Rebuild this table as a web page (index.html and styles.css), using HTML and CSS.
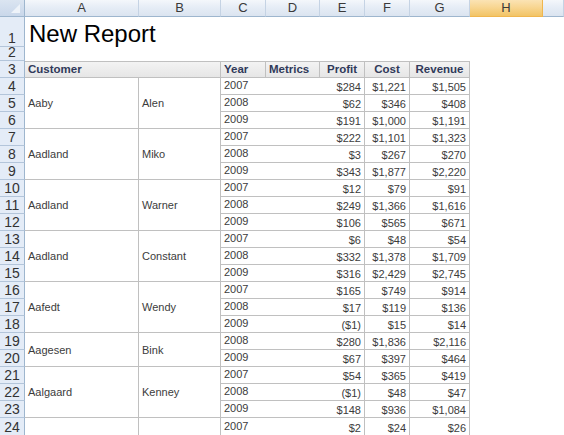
FILE: index.html
```html
<!DOCTYPE html>
<html>
<head>
<meta charset="utf-8">
<title>New Report</title>
<link rel="stylesheet" href="styles.css">
</head>
<body>
<div class="sheet">
  <div class="corner"><svg width="24" height="16" viewBox="0 0 24 16"><polygon points="20,4 20,13 11,13" fill="#eef3f9"/></svg></div>
  <div class="ch">A</div><div class="ch">B</div><div class="ch">C</div><div class="ch">D</div><div class="ch">E</div><div class="ch">F</div><div class="ch">G</div><div class="ch sel">H</div><div class="ch"></div>

  <div class="rh">1</div><div class="title">New Report</div>
  <div class="rh">2</div><div class="blank wide"></div>

  <div class="rh">3</div>
  <div class="hd l span2">Customer</div>
  <div class="hd l">Year</div>
  <div class="hd l">Metrics</div>
  <div class="hd">Profit</div>
  <div class="hd">Cost</div>
  <div class="hd">Revenue</div>
  <div class="blank span2"></div>

  <div class="rh">4</div><div class="name g3">Aaby</div><div class="name g3">Alen</div><div class="yr">2007</div><div class="num">$284</div><div class="num">$1,221</div><div class="num">$1,505</div><div class="blank span2"></div>
  <div class="rh">5</div><div class="yr">2008</div><div class="num">$62</div><div class="num">$346</div><div class="num">$408</div><div class="blank span2"></div>
  <div class="rh">6</div><div class="yr">2009</div><div class="num">$191</div><div class="num">$1,000</div><div class="num">$1,191</div><div class="blank span2"></div>

  <div class="rh">7</div><div class="name g3">Aadland</div><div class="name g3">Miko</div><div class="yr">2007</div><div class="num">$222</div><div class="num">$1,101</div><div class="num">$1,323</div><div class="blank span2"></div>
  <div class="rh">8</div><div class="yr">2008</div><div class="num">$3</div><div class="num">$267</div><div class="num">$270</div><div class="blank span2"></div>
  <div class="rh">9</div><div class="yr">2009</div><div class="num">$343</div><div class="num">$1,877</div><div class="num">$2,220</div><div class="blank span2"></div>

  <div class="rh">10</div><div class="name g3">Aadland</div><div class="name g3">Warner</div><div class="yr">2007</div><div class="num">$12</div><div class="num">$79</div><div class="num">$91</div><div class="blank span2"></div>
  <div class="rh">11</div><div class="yr">2008</div><div class="num">$249</div><div class="num">$1,366</div><div class="num">$1,616</div><div class="blank span2"></div>
  <div class="rh">12</div><div class="yr">2009</div><div class="num">$106</div><div class="num">$565</div><div class="num">$671</div><div class="blank span2"></div>

  <div class="rh">13</div><div class="name g3">Aadland</div><div class="name g3">Constant</div><div class="yr">2007</div><div class="num">$6</div><div class="num">$48</div><div class="num">$54</div><div class="blank span2"></div>
  <div class="rh">14</div><div class="yr">2008</div><div class="num">$332</div><div class="num">$1,378</div><div class="num">$1,709</div><div class="blank span2"></div>
  <div class="rh">15</div><div class="yr">2009</div><div class="num">$316</div><div class="num">$2,429</div><div class="num">$2,745</div><div class="blank span2"></div>

  <div class="rh">16</div><div class="name g3">Aafedt</div><div class="name g3">Wendy</div><div class="yr">2007</div><div class="num">$165</div><div class="num">$749</div><div class="num">$914</div><div class="blank span2"></div>
  <div class="rh">17</div><div class="yr">2008</div><div class="num">$17</div><div class="num">$119</div><div class="num">$136</div><div class="blank span2"></div>
  <div class="rh">18</div><div class="yr">2009</div><div class="num">($1)</div><div class="num">$15</div><div class="num">$14</div><div class="blank span2"></div>

  <div class="rh">19</div><div class="name g2">Aagesen</div><div class="name g2">Bink</div><div class="yr">2008</div><div class="num">$280</div><div class="num">$1,836</div><div class="num">$2,116</div><div class="blank span2"></div>
  <div class="rh">20</div><div class="yr">2009</div><div class="num">$67</div><div class="num">$397</div><div class="num">$464</div><div class="blank span2"></div>

  <div class="rh">21</div><div class="name g3">Aalgaard</div><div class="name g3">Kenney</div><div class="yr">2007</div><div class="num">$54</div><div class="num">$365</div><div class="num">$419</div><div class="blank span2"></div>
  <div class="rh">22</div><div class="yr">2008</div><div class="num">($1)</div><div class="num">$48</div><div class="num">$47</div><div class="blank span2"></div>
  <div class="rh">23</div><div class="yr">2009</div><div class="num">$148</div><div class="num">$936</div><div class="num">$1,084</div><div class="blank span2"></div>

  <div class="rh">24</div><div class="name"></div><div class="name"></div><div class="yr">2007</div><div class="num">$2</div><div class="num">$24</div><div class="num">$26</div><div class="blank span2"></div>
</div>
</body>
</html>
```

FILE: styles.css
```css
html, body {
  margin: 0;
  padding: 0;
  overflow: hidden;
  background: #ffffff;
}

.sheet {
  display: grid;
  grid-template-columns: 25px 114px 82px 45px 54px 45px 45px 60px 73px 1fr;
  grid-template-rows: 17px 30px 14px 17px repeat(20, 17px) 18px;
  width: 564px;
  height: 435px;
  overflow: hidden;
  font-family: "Liberation Sans", Arial, sans-serif;
  color: #333333;
}

.sheet > div {
  box-sizing: border-box;
  min-width: 0;
  overflow: hidden;
  white-space: nowrap;
}

.corner {
  background: linear-gradient(#dbe5f1, #c9d7ea);
  border-right: 1px solid #9eb6ce;
  border-bottom: 1px solid #9eb6ce;
}
.corner svg { display: block; }

.ch {
  background: linear-gradient(#f4f7fb 0%, #e6edf6 45%, #dbe4f0 100%);
  border-right: 1px solid #c5d3e4;
  border-bottom: 1px solid #9eb6ce;
  font-size: 13px;
  line-height: 14px;
  color: #3a3a3a;
  display: flex;
  align-items: flex-end;
  justify-content: center;
  padding-bottom: 1px;
}
.ch.sel {
  background: linear-gradient(#fbe3b4 0%, #f8d692 45%, #f2c466 100%);
  border-right: 1px solid #f0b64e;
  border-bottom: 1px solid #f0b64e;
}

.sheet > .rh {
  background: #e4ecf7;
  border-right: 1px solid #9eb6ce;
  border-bottom: 1px solid #b3c5da;
  font-size: 14px;
  line-height: 12px;
  color: #333333;
  display: flex;
  align-items: flex-end;
  justify-content: center;
  padding-bottom: 2px;
  overflow: visible;
}

.title {
  grid-column: span 9;
  font-size: 24px;
  line-height: 26px;
  color: #000000;
  display: flex;
  align-items: flex-end;
  padding-left: 4px;
}

.wide { grid-column: span 9; }
.span2 { grid-column: span 2; }

.hd {
  background: linear-gradient(#f3f3f3, #e6e6e6);
  border-top: 1px solid #c0c0c0;
  border-right: 1px solid #c0c0c0;
  border-bottom: 1px solid #c0c0c0;
  font-size: 11.5px;
  font-weight: bold;
  line-height: 13px;
  color: #303a5a;
  display: flex;
  align-items: flex-end;
  justify-content: center;
  padding-bottom: 1px;
}
.hd.l {
  justify-content: flex-start;
  padding-left: 3px;
}

.name {
  border-right: 1px solid #c0c0c0;
  border-bottom: 1px solid #c0c0c0;
  font-size: 11px;
  color: #3c3c3c;
  display: flex;
  align-items: center;
  padding-left: 3px;
}
.g3 { grid-row: span 3; }
.g2 { grid-row: span 2; }

.yr {
  grid-column: span 2;
  border-bottom: 1px solid #c0c0c0;
  font-size: 11px;
  line-height: 13px;
  color: #3c3c3c;
  display: flex;
  align-items: flex-end;
  padding-left: 3px;
  padding-bottom: 2px;
}

.num {
  border-right: 1px solid #c0c0c0;
  border-bottom: 1px solid #c0c0c0;
  font-size: 11px;
  line-height: 13px;
  color: #3c3c3c;
  display: flex;
  align-items: flex-end;
  justify-content: flex-end;
  padding-right: 3px;
}
```
